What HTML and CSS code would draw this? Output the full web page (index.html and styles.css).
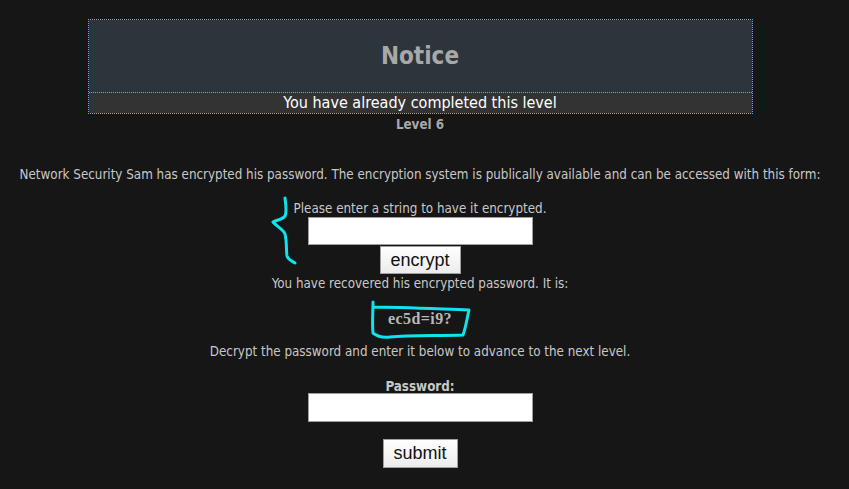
FILE: index.html
```html
<!DOCTYPE html>
<html>
<head>
<meta charset="utf-8">
<link rel="stylesheet" href="styles.css">
</head>
<body>
<div class="page">
  <div class="notice">
    <div class="notice-head">Notice</div>
    <div class="notice-msg">You have already completed this level</div>
  </div>
  <div class="level">Level 6</div>
  <p class="intro">Network Security Sam has encrypted his password. The encryption system is publically available and can be accessed with this form:</p>
  <form class="enc">
    <div class="line">Please enter a string to have it encrypted.</div>
    <input class="field" type="text">
    <button class="btn btn-enc" type="button">encrypt</button>
  </form>
  <div class="line recovered">You have recovered his encrypted password. It is:</div>
  <div class="pw">ec5d=i9?</div>
  <div class="line decrypt">Decrypt the password and enter it below to advance to the next level.</div>
  <form class="sub">
    <div class="label">Password:</div>
    <input class="field field-pw" type="password">
    <button class="btn btn-sub" type="button">submit</button>
  </form>
</div>
<svg class="marks" width="849" height="489" viewBox="0 0 849 489">
  <path d="M285 198 C286 205 287 212 285 216 C282 220 276 220 273 222 C276 226 283 229 285 234 C287 242 286 250 287 256 C288 260 292 261 295 263" />
  <path d="M373 302 C373 312 372 324 373 333 C378 337 383 338 390 337 C410 335 440 336 463 335 C466 327 467 318 469 310 C440 309 400 307 373 307" />
</svg>
</body>
</html>
```
FILE: styles.css
```css
html, body {
  margin: 0;
  padding: 0;
  background: #161616;
}
body {
  font-family: Tahoma, "DejaVu Sans Condensed", "DejaVu Sans", sans-serif;
  font-size: 13.3px;
  color: #c8c8c8;
}
.page {
  width: 840px;
  text-align: center;
  padding-top: 19px;
}
.notice {
  width: 665px;
  box-sizing: border-box;
  margin: 0 auto;
  border: 1px dotted #5aaee0;
}
.notice-head {
  height: 72px;
  background: #2c353b;
  color: #a8a8a8;
  font-weight: bold;
  font-size: 24px;
  line-height: 72px;
  border-bottom: 1px dotted #5aaee0;
}
.notice-msg {
  height: 20px;
  line-height: 20px;
  background: #333333;
  color: #ffffff;
  font-size: 16px;
}
.level {
  font-weight: bold;
  color: #a8a8a8;
  line-height: 16px;
  margin-top: 3px;
}
.intro {
  margin: 34px 0 0;
  line-height: 16px;
}
.enc {
  margin-top: 18px;
  display: flex;
  flex-direction: column;
  align-items: center;
}
.line {
  line-height: 16px;
}
.field {
  display: block;
  box-sizing: border-box;
  width: 225px;
  height: 28px;
  margin: 0;
  border: 1px solid #a0a0a0;
  background: #fff;
  padding: 0;
}
.field-pw { margin-top: -2px; height: 29px; }
.btn {
  display: block;
  box-sizing: border-box;
  height: 28px;
  margin: 1px 0 0;
  border: 1px solid #a0a0a0;
  background: linear-gradient(#ffffff, #ececec);
  font-family: "Liberation Sans", Arial, sans-serif;
  font-size: 18px;
  color: #111;
  padding: 0 8px;
}
.btn-enc { width: 81px; }
.btn-sub { width: 75px; height: 29px; margin-top: 17px; }
.recovered { margin-top: 2px; }
.pw {
  font-family: "Liberation Serif", "Times New Roman", serif;
  font-weight: bold;
  font-size: 16px;
  letter-spacing: 0.4px;
  line-height: 16px;
  color: #b8b8b8;
  margin-top: 19px;
}
.decrypt { margin-top: 17px; }
.sub {
  margin-top: 19px;
  display: flex;
  flex-direction: column;
  align-items: center;
}
.label {
  font-weight: bold;
  line-height: 16px;
}
.marks {
  position: absolute;
  left: 0;
  top: 0;
  pointer-events: none;
  fill: none;
  stroke: #0fe3ec;
  stroke-width: 3;
  stroke-linecap: round;
  stroke-linejoin: round;
}
```
